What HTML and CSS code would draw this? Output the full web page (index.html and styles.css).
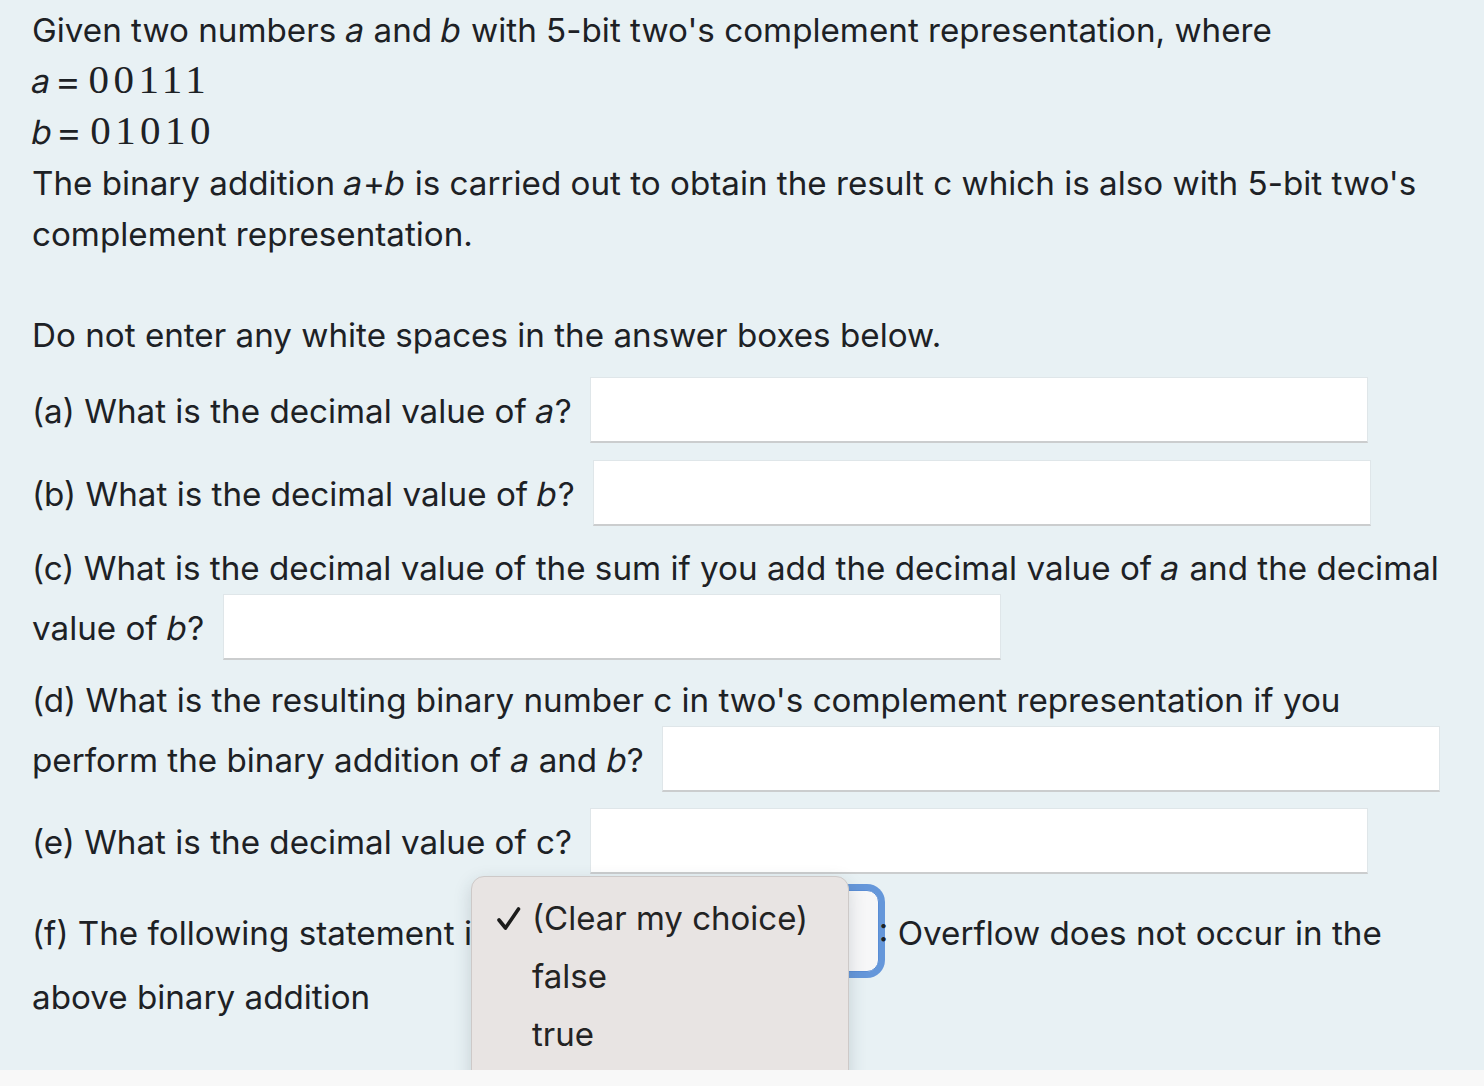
FILE: index.html
```html
<!DOCTYPE html>
<html lang="en">
<head>
<meta charset="utf-8">
<title>Two's complement question</title>
<link rel="stylesheet" href="styles.css">
</head>
<body>
<main class="formulation">
  <p class="intro">Given two numbers <span class="v">a</span> and <span class="v">b</span> with 5-bit two's complement representation, where<br><span class="v">a</span><span class="eq">=</span><span class="num">00111</span><br><span class="v">b</span><span class="eq">=</span><span class="num">01010</span><br>The binary addition <span class="v">a</span>+<span class="v">b</span> is carried out to obtain the result c which is also with 5-bit two's complement representation.</p>
  <p class="note">Do not enter any white spaces in the answer boxes below.</p>
  <p class="sub sub-a">(a) What is the decimal value of <span class="v">a</span>? <input class="answer" type="text" aria-label="Answer a"></p>
  <p class="sub sub-b">(b) What is the decimal value of <span class="v">b</span>? <input class="answer" type="text" aria-label="Answer b"></p>
  <p class="sub sub-c">(c) What is the decimal value of the sum if you add the decimal value of <span class="v">a</span> and the decimal value of <span class="v">b</span>? <input class="answer" type="text" aria-label="Answer c"></p>
  <p class="sub sub-d">(d) What is the resulting binary number c in two's complement representation if you perform the binary addition of <span class="v">a</span> and <span class="v">b</span>? <input class="answer" type="text" aria-label="Answer d"></p>
  <p class="sub sub-e">(e) What is the decimal value of c? <input class="answer" type="text" aria-label="Answer e"></p>
  <p class="sub sub-f">(f) The following statement is <select class="choice" aria-label="Answer f"><option></option></select>: Overflow does not occur in the above binary addition</p>

  <div class="menu" role="listbox">
    <div class="menu-item selected"><svg class="check" viewBox="0 0 26 26" width="26" height="26"><path d="M3 14 L9.5 22 L22.5 3" fill="none" stroke="#1c1c1c" stroke-width="3.6" stroke-linecap="round" stroke-linejoin="round"/></svg>(Clear my choice)</div>
    <div class="menu-item">false</div>
    <div class="menu-item">true</div>
  </div>
</main>
<div class="bottom-bar"></div>
</body>
</html>
```
FILE: styles.css
```css
html, body {
  margin: 0;
  padding: 0;
}

body {
  background: #f8f8f8;
  font-family: "Inter", "Liberation Sans", sans-serif;
  color: #1d2125;
}

.formulation {
  position: relative;
  height: 1070px;
  box-sizing: border-box;
  overflow: hidden;
  background: #e8f1f4;
  padding: 5px 32px 0 32px;
  font-size: 33.2px;
  line-height: 51px;
}

.formulation p {
  margin: 0;
  width: 1420px;
}

.v {
  display: inline-block;
  font-style: normal;
  transform: skewX(-12deg);
}

.eq {
  display: inline-block;
  margin: 0 10px 0 6px;
  transform: scaleX(1.2);
}

.num {
  font-family: "Liberation Serif", "Times New Roman", serif;
  font-size: 41px;
  line-height: 1;
  letter-spacing: 4.4px;
}

.note {
  margin-top: 50px !important;
}

.sub-a { margin-top: 16px !important; }
.sub-b { margin-top: 9px !important; }
.sub-c { margin-top: 9px !important; }
.sub-d { margin-top: 7px !important; }
.sub-e { margin-top: 8px !important; }
.sub-f { margin-top: 18px !important; }

.answer {
  box-sizing: border-box;
  width: 778px;
  height: 66px;
  margin: 0 0 8px 9px;
  padding: 0 12px;
  vertical-align: middle;
  background: #ffffff;
  border: 1px solid #dfe6e9;
  border-bottom: 2px solid #cbcdce;
  border-radius: 0;
  font: inherit;
  outline: none;
}

.choice {
  -webkit-appearance: none;
  appearance: none;
  box-sizing: border-box;
  width: 380px;
  height: 82px;
  margin: -10px 0 0 0;
  vertical-align: middle;
  background: #f7f7f8;
  border: 1px solid #5a8dd5;
  border-radius: 12px;
  box-shadow: 0 0 0 6px #6597da;
  font: inherit;
  color: transparent;
  outline: none;
}

.menu {
  position: absolute;
  left: 471px;
  top: 876px;
  width: 378px;
  height: 230px;
  box-sizing: border-box;
  padding: 12px 0 0 0;
  background: #e8e4e3;
  border: 1px solid #cdc9c8;
  border-radius: 13px;
  box-shadow: 0 6px 18px rgba(40, 60, 70, 0.18);
  font-size: 33px;
  line-height: 58px;
  color: #232323;
}

.menu-item {
  position: relative;
  height: 58px;
  padding-left: 60px;
  white-space: nowrap;
}

.check {
  position: absolute;
  left: 24px;
  top: 17px;
}

.bottom-bar {
  height: 16px;
  background: #f8f8f8;
}
```
